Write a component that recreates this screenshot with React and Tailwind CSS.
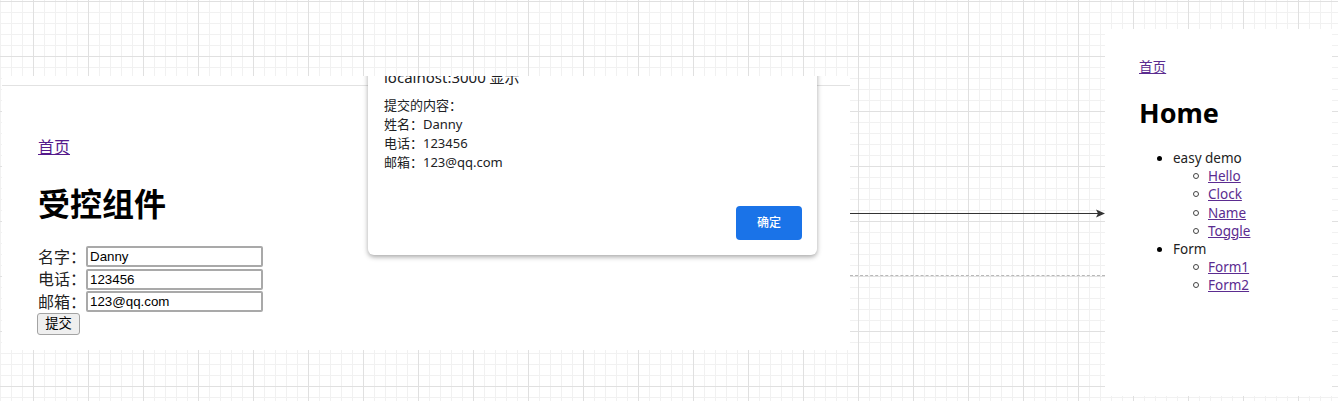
const cjk = "font-['Noto_Sans','Noto_Sans_CJK_SC',sans-serif]"

function Field({ label, value }) {
  return (
    <div className="flex h-[22.5px] items-center">
      <span className="w-[48px] text-[16px] leading-[22px] text-[#222]">{label}</span>
      <input
        readOnly
        value={value}
        className="h-[21px] w-[177px] rounded-[2px] border-2 border-[#a9a9a9] bg-white px-[2px] font-['Liberation_Sans',sans-serif] text-[13.33px] text-black outline-none"
      />
    </div>
  )
}

function AlertDialog() {
  return (
    <div className="absolute left-[366px] top-[-20px] h-[199px] w-[449px] rounded-b-[6px] bg-white shadow-[0_2px_5px_rgba(0,0,0,0.35)]">
      <div className="pl-[16px] pt-[11px]">
        <div className="text-[15px] leading-[20px] text-[#202124]">localhost:3000 显示</div>
        <div className="mt-[8.5px] text-[13px] leading-[19px] text-[#202124]">
          <div>提交的内容：</div>
          <div>姓名：Danny</div>
          <div>电话：123456</div>
          <div>邮箱：123@qq.com</div>
        </div>
      </div>
      <button className="absolute bottom-[15px] right-[15px] flex h-[34px] w-[66px] items-center justify-center rounded-[4px] bg-[#1a73e8] text-[12px] font-medium text-white">
        确定
      </button>
    </div>
  )
}

function FormPage() {
  return (
    <div className={`absolute left-[2px] top-[76px] h-[274px] w-[848px] overflow-hidden bg-white ${cjk}`}>
      <div className="absolute inset-x-0 top-[9px] h-px bg-[#e2e2e2]" />
      <div className="pl-[36px] pt-[60px]">
        <a className="block h-[23px] text-[16px] leading-[23px] text-[#551a8b] underline">首页</a>
        <h1 className="mt-[24.5px] h-[40px] text-[32px] font-bold leading-[40px] text-black">受控组件</h1>
        <div className="mt-[22px]">
          <Field label="名字：" value="Danny" />
          <Field label="电话：" value="123456" />
          <Field label="邮箱：" value="123@qq.com" />
          <button className="ml-[-1px] flex h-[22px] w-[43px] items-center justify-center rounded-[3px] border border-[#a3a3a3] bg-[#efefef] text-[13.33px] text-black">
            提交
          </button>
        </div>
      </div>
      <AlertDialog />
    </div>
  )
}

function Item({ children, nested, link }) {
  return (
    <div className={`flex h-[18.2px] items-center ${nested ? 'pl-[88px]' : 'pl-[52px]'}`}>
      {nested ? (
        <span className="mr-[9px] h-[6px] w-[6px] rounded-full border-[1.5px] border-[#444]" />
      ) : (
        <span className="mr-[11px] h-[5px] w-[5px] rounded-full bg-black" />
      )}
      <span className={link ? 'text-[#5b2c90] underline' : 'text-[#222]'}>{children}</span>
    </div>
  )
}

function HomePage() {
  return (
    <div className={`absolute left-[1105px] top-[29px] h-[367px] w-[227px] bg-white ${cjk}`}>
      <div className="pl-[34px] pt-[27.5px]">
        <a className="block text-[13.6px] leading-[19px] text-[#5b2c90] underline">首页</a>
        <h1 className="mt-[22.5px] text-[27px] font-bold leading-[30px] text-black">Home</h1>
      </div>
      <div className="mt-[21px] text-[13.5px] leading-[18.2px]">
        <Item>easy demo</Item>
        <Item nested link>Hello</Item>
        <Item nested link>Clock</Item>
        <Item nested link>Name</Item>
        <Item nested link>Toggle</Item>
        <Item>Form</Item>
        <Item nested link>Form1</Item>
        <Item nested link>Form2</Item>
      </div>
    </div>
  )
}

export default function App() {
  return (
    <div className="relative h-[401px] w-[1338px] overflow-hidden bg-white bg-[linear-gradient(#e0e0e0_1px,transparent_1px),linear-gradient(90deg,#e0e0e0_1px,transparent_1px),linear-gradient(#f1f1f1_1px,transparent_1px),linear-gradient(90deg,#f1f1f1_1px,transparent_1px)] bg-[size:55px_55px,55px_55px,11px_11px,11px_11px] bg-[position:33px_1px,33px_1px,0px_1px,0px_1px]">
      <FormPage />

      {/* connector */}
      <svg className="absolute left-[850px] top-[207px]" width="256" height="12" viewBox="0 0 256 12">
        <line x1="0" y1="6.5" x2="248" y2="6.5" stroke="#333" strokeWidth="1.2" />
        <polygon points="246,2.5 255,6.5 246,10.5 248,6.5" fill="#333" />
      </svg>
      <div className="absolute left-[850px] top-[275px] w-[255px] border-t border-dashed border-[#b8b8b8]" />

      <HomePage />
    </div>
  )
}
